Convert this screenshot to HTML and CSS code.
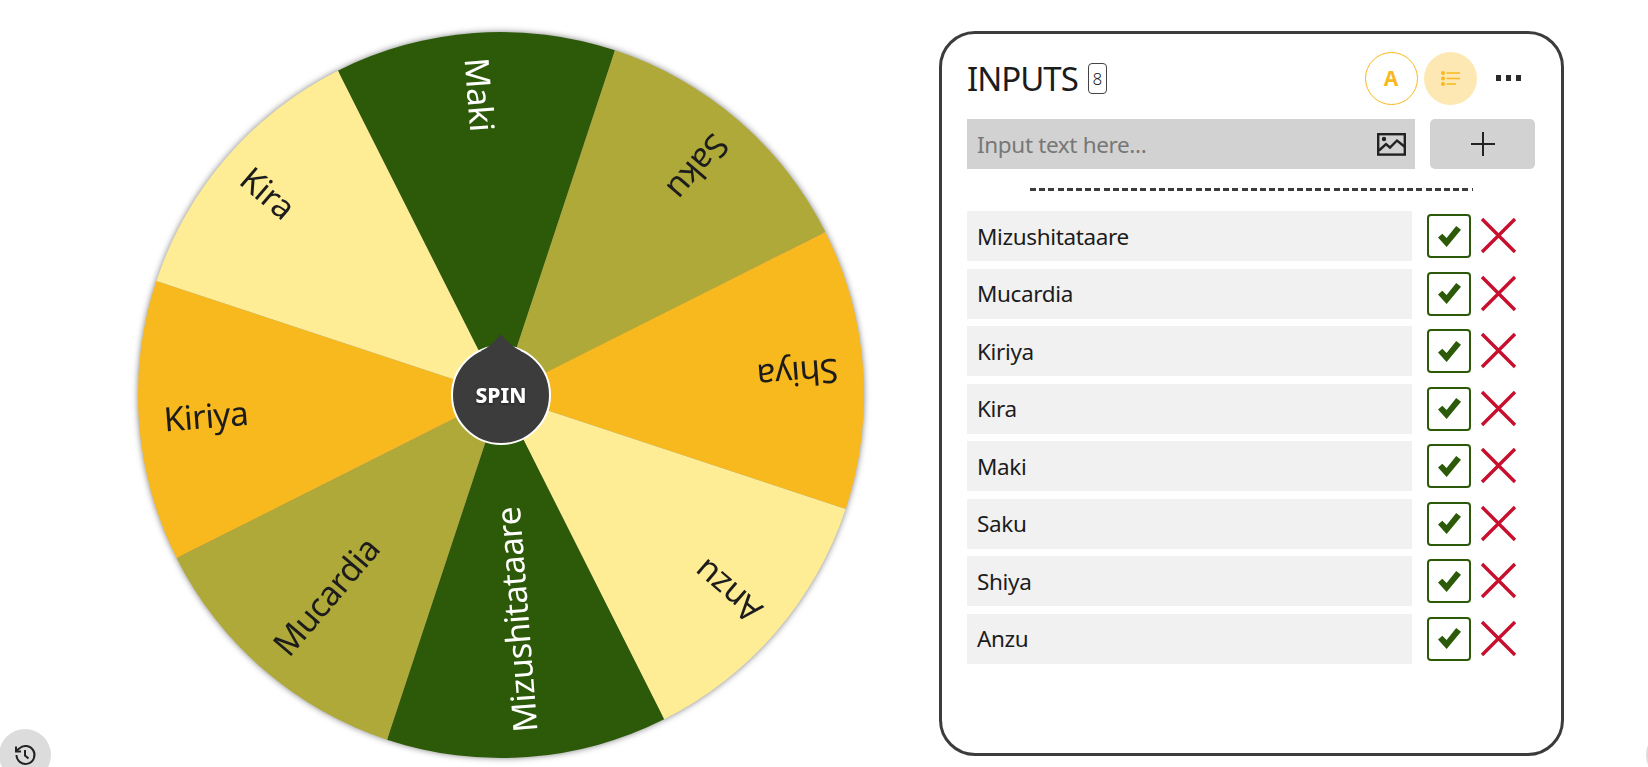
FILE: index.html
```html
<!DOCTYPE html>
<html lang="en">
<head>
    <meta charset="UTF-8">
    <meta name="viewport" content="width=device-width, initial-scale=1.0">
    <title>Spin the Wheel</title>
    <link rel="stylesheet" href="styles.css">
</head>
<body>
    <main class="page">
        <!-- Wheel -->
        <section class="wheel-area">
            <svg class="wheel" viewBox="-363 -363 726 726" width="726" height="726">
                <defs>
                    <path id="slice" d="M0 0L-138.9 -335.4A363 363 0 0 1 138.9 -335.4Z"></path>
                </defs>
                <use href="#slice" class="slice-green" transform="rotate(-4.2)"></use>
                <use href="#slice" class="slice-olive" transform="rotate(40.8)"></use>
                <use href="#slice" class="slice-amber" transform="rotate(85.8)"></use>
                <use href="#slice" class="slice-cream" transform="rotate(130.8)"></use>
                <use href="#slice" class="slice-green" transform="rotate(175.8)"></use>
                <use href="#slice" class="slice-olive" transform="rotate(220.8)"></use>
                <use href="#slice" class="slice-amber" transform="rotate(265.8)"></use>
                <use href="#slice" class="slice-cream" transform="rotate(310.8)"></use>

                <text class="label label-light" x="-338" y="10" transform="rotate(85.5)">Maki</text>
                <text class="label" x="-338" y="10" transform="rotate(130.5)">Saku</text>
                <text class="label" x="-338" y="10" transform="rotate(175.5)">Shiya</text>
                <text class="label" x="-338" y="10" transform="rotate(220.5)">Anzu</text>
                <text class="label label-light" x="-338" y="10" transform="rotate(265.5)">Mizushitataare</text>
                <text class="label" x="-338" y="10" transform="rotate(310.5)">Mucardia</text>
                <text class="label" x="-338" y="10" transform="rotate(355.5)">Kiriya</text>
                <text class="label" x="-338" y="10" transform="rotate(40.5)">Kira</text>

                <circle class="hub" cx="0" cy="0" r="49"></circle>
                <path class="hub-pointer" d="M-20 -44Q-8 -50 0 -61Q8 -50 20 -44Z"></path>
                <text class="spin" x="0" y="8" text-anchor="middle">SPIN</text>
            </svg>
        </section>

        <!-- Inputs panel -->
        <section class="panel">
            <div class="panel-head">
                <h1 class="panel-title">INPUTS</h1>
                <span class="count">8</span>
                <div class="panel-tools">
                    <button class="round-btn round-outline">A</button>
                    <button class="round-btn round-filled">
                        <svg width="19" height="15" viewBox="0 0 19 15">
                            <circle cx="2" cy="2" r="2"></circle>
                            <circle cx="2" cy="7.5" r="2"></circle>
                            <circle cx="2" cy="13" r="2"></circle>
                            <path d="M5.500 2H19M5.500 7.500H19M5.500 13H15"></path>
                        </svg>
                    </button>
                    <button class="more-btn"><span></span><span></span><span></span></button>
                </div>
            </div>

            <div class="add-row">
                <div class="text-input">
                    <span class="placeholder">Input text here...</span>
                    <svg class="image-icon" width="29" height="23" viewBox="0 0 29 23">
                        <rect x="1.200" y="1.200" width="26.600" height="20.400"></rect>
                        <circle cx="7" cy="6" r="2.200"></circle>
                        <path d="M2 17.500L9 11L13 14.500L20 7.500L28 14"></path>
                    </svg>
                </div>
                <button class="add-btn">
                    <svg width="26" height="26" viewBox="0 0 26 26"><path d="M13 1V25M1 13H25"></path></svg>
                </button>
            </div>

            <div class="divider"></div>

            <ul class="entries">
                <li class="entry">
                    <span class="entry-name">Mizushitataare</span>
                    <span class="entry-check"><svg width="25" height="23" viewBox="0 0 26 24"><path d="M1 13L5.500 9L10 13.500L20 1L25 5L10 23Z"></path></svg></span>
                    <svg class="entry-remove" width="37" height="37" viewBox="0 0 37 37"><path d="M2 2L35 35M35 2L2 35"></path></svg>
                </li>
                <li class="entry">
                    <span class="entry-name">Mucardia</span>
                    <span class="entry-check"><svg width="25" height="23" viewBox="0 0 26 24"><path d="M1 13L5.500 9L10 13.500L20 1L25 5L10 23Z"></path></svg></span>
                    <svg class="entry-remove" width="37" height="37" viewBox="0 0 37 37"><path d="M2 2L35 35M35 2L2 35"></path></svg>
                </li>
                <li class="entry">
                    <span class="entry-name">Kiriya</span>
                    <span class="entry-check"><svg width="25" height="23" viewBox="0 0 26 24"><path d="M1 13L5.500 9L10 13.500L20 1L25 5L10 23Z"></path></svg></span>
                    <svg class="entry-remove" width="37" height="37" viewBox="0 0 37 37"><path d="M2 2L35 35M35 2L2 35"></path></svg>
                </li>
                <li class="entry">
                    <span class="entry-name">Kira</span>
                    <span class="entry-check"><svg width="25" height="23" viewBox="0 0 26 24"><path d="M1 13L5.500 9L10 13.500L20 1L25 5L10 23Z"></path></svg></span>
                    <svg class="entry-remove" width="37" height="37" viewBox="0 0 37 37"><path d="M2 2L35 35M35 2L2 35"></path></svg>
                </li>
                <li class="entry">
                    <span class="entry-name">Maki</span>
                    <span class="entry-check"><svg width="25" height="23" viewBox="0 0 26 24"><path d="M1 13L5.500 9L10 13.500L20 1L25 5L10 23Z"></path></svg></span>
                    <svg class="entry-remove" width="37" height="37" viewBox="0 0 37 37"><path d="M2 2L35 35M35 2L2 35"></path></svg>
                </li>
                <li class="entry">
                    <span class="entry-name">Saku</span>
                    <span class="entry-check"><svg width="25" height="23" viewBox="0 0 26 24"><path d="M1 13L5.500 9L10 13.500L20 1L25 5L10 23Z"></path></svg></span>
                    <svg class="entry-remove" width="37" height="37" viewBox="0 0 37 37"><path d="M2 2L35 35M35 2L2 35"></path></svg>
                </li>
                <li class="entry">
                    <span class="entry-name">Shiya</span>
                    <span class="entry-check"><svg width="25" height="23" viewBox="0 0 26 24"><path d="M1 13L5.500 9L10 13.500L20 1L25 5L10 23Z"></path></svg></span>
                    <svg class="entry-remove" width="37" height="37" viewBox="0 0 37 37"><path d="M2 2L35 35M35 2L2 35"></path></svg>
                </li>
                <li class="entry">
                    <span class="entry-name">Anzu</span>
                    <span class="entry-check"><svg width="25" height="23" viewBox="0 0 26 24"><path d="M1 13L5.500 9L10 13.500L20 1L25 5L10 23Z"></path></svg></span>
                    <svg class="entry-remove" width="37" height="37" viewBox="0 0 37 37"><path d="M2 2L35 35M35 2L2 35"></path></svg>
                </li>
            </ul>
        </section>
    </main>

    <button class="history-btn">
        <svg width="24" height="24" viewBox="0 0 24 24">
            <path d="M3.500 12a9 9 0 1 0 2.600-6.400L3 8.500"></path>
            <path d="M3 3.500V8.500H8"></path>
            <path d="M12 7V12.500L15.500 15.500"></path>
        </svg>
    </button>
    <div class="edge-btn"></div>
</body>
</html>
```

FILE: styles.css
```css
/* CSS Variables */
:root {
    --green: #2d5a08;
    --olive: #afa93a;
    --amber: #f8b91e;
    --cream: #feed95;
    --dark: #3c3c3c;
    --text: #1c1c1c;
    --grey: #d2d2d2;
    --light-grey: #f1f1f1;
    --red: #c8102e;
}

/* Reset and base styles */
* {
    margin: 0;
    padding: 0;
    box-sizing: border-box;
}

html, body {
    height: 100%;
    overflow: hidden;
}

body {
    font-family: "Noto Sans", "Open Sans", sans-serif;
    color: var(--text);
    background: #fff;
}

button {
    border: none;
    background: none;
    font-family: inherit;
}

.page {
    display: flex;
    align-items: flex-start;
    padding: 31px 0 0 138px;
}

/* Wheel */
.wheel-area {
    flex: none;
    margin: 1px 75px 0 0;
}

.wheel {
    display: block;
    overflow: visible;
    filter: drop-shadow(0 0 3px rgba(0, 0, 0, 0.5));
}

.slice-green { fill: var(--green); }
.slice-olive { fill: var(--olive); }
.slice-amber { fill: var(--amber); }
.slice-cream { fill: var(--cream); }

.label {
    font-size: 33.5px;
    letter-spacing: -0.57px;
    fill: var(--text);
}

.label-light {
    fill: #fff;
}

.hub {
    fill: var(--dark);
    stroke: #fff;
    stroke-width: 2px;
}

.hub-pointer {
    fill: var(--dark);
}

.spin {
    font-size: 21px;
    font-weight: 800;
    fill: #fff;
    filter: drop-shadow(0 1px 1px rgba(0, 0, 0, 0.5));
}

/* Inputs panel */
.panel {
    flex: none;
    width: 625px;
    height: 725px;
    border: 3px solid var(--dark);
    border-radius: 36px;
    padding: 16px 25px 0;
}

.panel-head {
    display: flex;
    align-items: center;
    height: 56px;
}

.panel-title {
    font-size: 33px;
    font-weight: 400;
    letter-spacing: -1px;
    line-height: 1;
}

.count {
    width: 19px;
    height: 31px;
    margin-left: 10px;
    border: 1px solid #444;
    border-radius: 4px;
    font-size: 17px;
    font-weight: 300;
    line-height: 29px;
    text-align: center;
}

.panel-tools {
    display: flex;
    align-items: center;
    margin-left: auto;
    padding-right: 15px;
}

.round-btn {
    display: flex;
    align-items: center;
    justify-content: center;
    width: 53px;
    height: 53px;
    border-radius: 50%;
}

.round-outline {
    border: 1px solid var(--amber);
    color: var(--amber);
    font-size: 21px;
    font-weight: 700;
    margin-right: 6px;
}

.round-filled {
    background: #fde8b4;
}

.round-filled svg circle {
    fill: var(--amber);
}

.round-filled svg path {
    fill: none;
    stroke: var(--amber);
    stroke-width: 1.6px;
}

.more-btn {
    display: flex;
    gap: 4.500px;
    margin-left: 19px;
}

.more-btn span {
    width: 5.500px;
    height: 5.500px;
    background: #2a2a2a;
}

/* Add row */
.add-row {
    display: flex;
    gap: 15px;
    height: 50px;
    margin-top: 13px;
}

.text-input {
    display: flex;
    align-items: center;
    justify-content: space-between;
    width: 448px;
    padding: 0 9px 0 10px;
    background: var(--grey);
}

.placeholder {
    font-size: 22.500px;
    letter-spacing: -0.35px;
    color: #777;
}

.image-icon {
    fill: none;
    stroke: #222;
    stroke-width: 2.400px;
}

.image-icon circle {
    fill: #222;
    stroke: none;
}

.add-btn {
    display: flex;
    align-items: center;
    justify-content: center;
    width: 105px;
    background: var(--grey);
    border-radius: 5px;
}

.add-btn svg {
    fill: none;
    stroke: #222;
    stroke-width: 2px;
}

.divider {
    width: 443px;
    height: 3px;
    margin: 19px 0 20px 63px;
    background: repeating-linear-gradient(90deg, var(--dark) 0 6px, transparent 6px 9.200px);
}

/* Entries */
.entries {
    list-style: none;
    display: flex;
    flex-direction: column;
    gap: 7.500px;
}

.entry {
    display: flex;
    align-items: center;
    height: 50px;
}

.entry-name {
    display: flex;
    align-items: center;
    width: 445px;
    height: 100%;
    padding: 0 10px;
    background: var(--light-grey);
    font-size: 22.500px;
    letter-spacing: -0.35px;
}

.entry-check {
    display: flex;
    align-items: center;
    justify-content: center;
    width: 44px;
    height: 44px;
    margin-left: 15px;
    border: 2px solid var(--green);
    border-radius: 4px;
}

.entry-check svg {
    fill: var(--green);
}

.entry-remove {
    margin: -1px 0 0 9px;
    fill: none;
    stroke: var(--red);
    stroke-width: 3.400px;
}

/* Corner buttons */
.history-btn {
    position: fixed;
    left: -1px;
    top: 729px;
    display: flex;
    align-items: center;
    justify-content: center;
    width: 52px;
    height: 52px;
    border-radius: 50%;
    background: #dcdcdc;
}

.history-btn svg {
    fill: none;
    stroke: #222;
    stroke-width: 2px;
}

.edge-btn {
    position: fixed;
    left: 1646px;
    top: 729px;
    width: 52px;
    height: 52px;
    border-radius: 50%;
    background: #dcdcdc;
}
```
